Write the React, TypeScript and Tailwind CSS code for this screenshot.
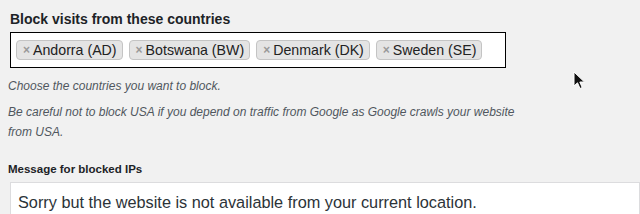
import React from 'react';

const countries = ['Andorra (AD)', 'Botswana (BW)', 'Denmark (DK)', 'Sweden (SE)'];

export default function App() {
  return (
    <div className="relative h-[214px] w-[640px] overflow-hidden bg-[#f1f1f1] font-['Liberation_Sans',Arial,sans-serif] text-[#1d2327]">
      <div className="pl-[10px] pt-[10px]">
        <h3 className="text-[14px] font-bold leading-[18px]">Block visits from these countries</h3>
        <div className="mt-[4px] flex h-[36px] w-[496px] items-center gap-[6px] border border-black bg-white px-[5px]">
          {countries.map((c) => (
            <span
              key={c}
              className="flex h-[20px] items-center gap-[3px] rounded-[4px] border border-[#c4c4c4] bg-[#e4e4e4] pl-[6px] pr-[5px] text-[14.2px] leading-none text-[#222]"
            >
              <span className="text-[12px] font-bold text-[#999]">×</span>
              {c}
            </span>
          ))}
        </div>
        <div className="-ml-[2px] w-[528px] text-[12px] italic leading-[20px] text-[#50575e]">
          <p className="mt-[8px]">Choose the countries you want to block.</p>
          <p className="mt-[6px]">
            Be careful not to block USA if you depend on traffic from Google as Google crawls your website from USA.
          </p>
          <h3 className="mt-[18px] text-[11.5px] font-bold not-italic leading-[18px] text-[#1d2327]">Message for blocked IPs</h3>
        </div>
        <div className="mt-[4px] h-[60px] border border-[#dcdcde] bg-white pl-[7px] pt-[9px] text-[16.3px] leading-[20px] text-[#2c3338]">
          Sorry but the website is not available from your current location.
        </div>
      </div>
      <svg className="absolute left-[573px] top-[71px]" width="14" height="20" viewBox="0 0 14 20">
        <path d="M1 1 L1 15 L4.5 11.8 L7 17.5 L9.2 16.5 L6.8 11 L11.5 11 Z" fill="#111" stroke="#fff" strokeWidth="1" />
      </svg>
    </div>
  );
}
